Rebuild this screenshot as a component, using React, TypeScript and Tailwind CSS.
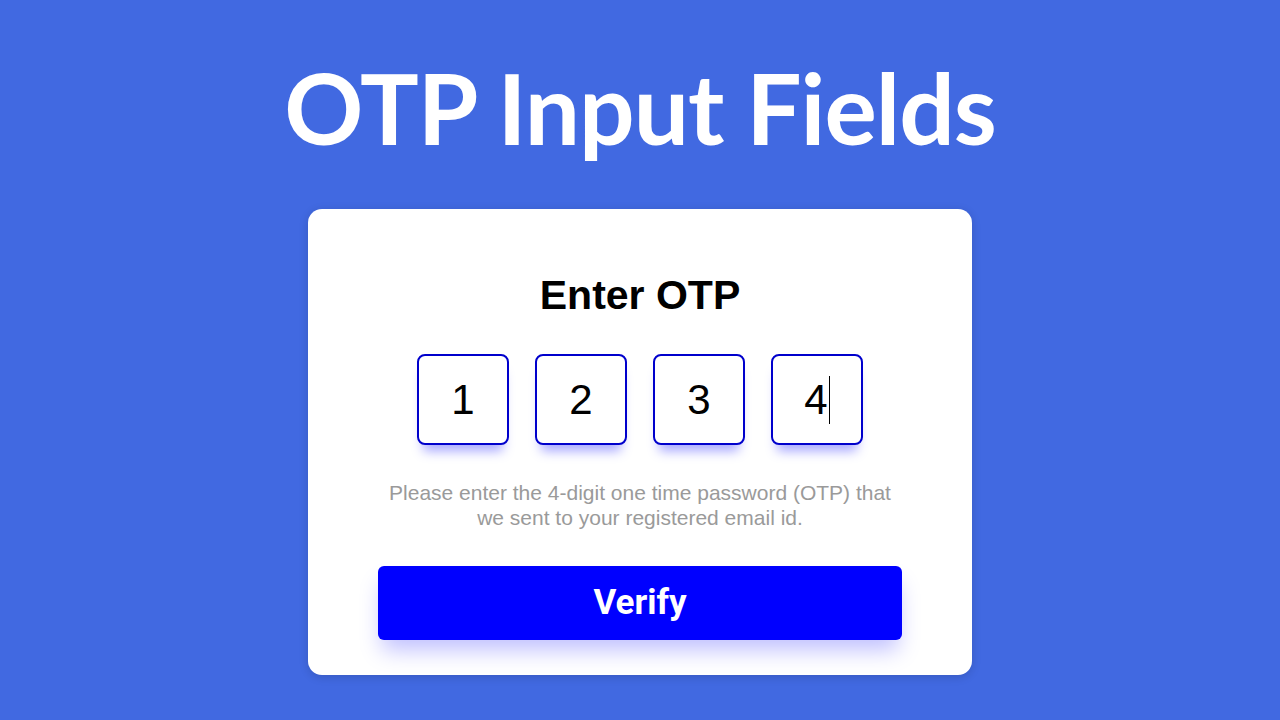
import React from 'react';

const digits = ['1', '2', '3', '4'];

const App: React.FC = () => {
  return (
    <div className="w-[1280px] h-[720px] bg-[#4169e1] flex flex-col items-center overflow-hidden">
      <h1 className="mt-[58px] text-white font-bold text-[98px] leading-none tracking-[-1px] font-['Lato',sans-serif]">
        OTP Input Fields
      </h1>

      <div className="mt-[53px] w-[664px] bg-white rounded-[14px] shadow-[0_2px_10px_rgba(0,0,0,0.15)] pt-[64px] px-[70px] pb-[35px] flex flex-col items-center font-['Liberation_Sans',Arial,sans-serif]">
        <h2 className="text-[41px] leading-[44px] font-bold text-black">Enter OTP</h2>

        <div className="mt-[37px] flex gap-[26px]">
          {digits.map((d, i) => (
            <div
              key={i}
              className="w-[92px] h-[91px] border-2 border-[#0000cc] rounded-[8px] bg-white flex items-center justify-center text-[42px] text-black shadow-[0_12px_12px_-6px_rgba(0,0,255,0.35)]"
            >
              <span>{d}</span>
              {i === digits.length - 1 && (
                <span className="ml-[1px] w-[1px] h-[48px] bg-black" />
              )}
            </div>
          ))}
        </div>

        <p className="mt-[35px] text-[21px] leading-[25px] text-[#9a9a9a] text-center whitespace-nowrap">
          Please enter the 4-digit one time password (OTP) that
          <br />
          we sent to your registered email id.
        </p>

        <button className="mt-[36px] w-[524px] h-[74px] bg-[#0000ff] rounded-[6px] text-white text-[35px] font-bold font-['Roboto',sans-serif] shadow-[0_14px_22px_-4px_rgba(0,0,255,0.25)]">
          Verify
        </button>
      </div>
    </div>
  );
};

export default App;
